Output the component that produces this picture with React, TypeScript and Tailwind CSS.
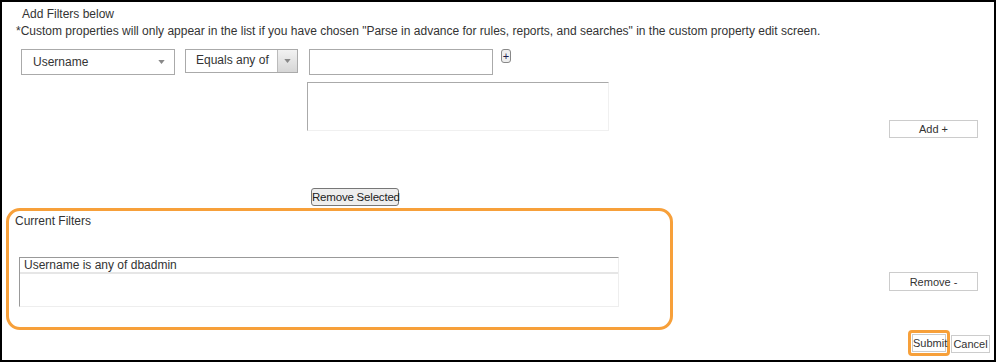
import React from "react";

const ORANGE = "#f7a03a";

function Caret() {
  return (
    <svg viewBox="0 0 8 5" className="h-[4px] w-[7px]">
      <path d="M0 0h8L4 5Z" fill="#888" />
    </svg>
  );
}

export default function App() {
  return (
    <div
      className="h-[363px] w-[996px] bg-white text-[12px] leading-[15px] whitespace-nowrap text-[#333]"
      style={{ fontFamily: '"Liberation Sans", Arial, sans-serif' }}
    >
      <div className="flex h-[362px] w-[996px] flex-col border-2 border-black">
        {/* header */}
        <div className="pl-[20px] pt-[5px]">Add Filters below</div>
        <div className="mt-[2px] pl-[14px]">
          *Custom properties will only appear in the list if you have chosen "Parse in advance for rules,
          reports, and searches" in the custom property edit screen.
        </div>

        {/* filter controls */}
        <div className="mt-[10px] ml-[19px] flex items-start">
          <div className="flex h-[26px] w-[154px] items-center justify-between border border-[#aaa] pl-[11px] pr-[9px]">
            <span>Username</span>
            <Caret />
          </div>
          <div className="ml-[10px] flex h-[24px] w-[113px] border border-[#aaa]">
            <div className="flex-1 pl-[10px] pt-[3px]">Equals any of</div>
            <div className="flex w-[20px] items-center justify-center border-l border-[#bbb] bg-gradient-to-b from-[#f2f2f2] to-[#d6d6d6]">
              <Caret />
            </div>
          </div>
          <input className="ml-[11px] h-[26px] w-[184px] border border-[#aaa] outline-none" />
          <button
            type="button"
            className="ml-[8px] flex h-[14px] w-[10px] items-center justify-center rounded-[3px] border border-[#888] bg-[#eee] text-[11px] leading-none text-[#1a1a4a]"
          >
            +
          </button>
        </div>

        <div className="mt-[7px] flex items-start">
          <textarea className="ml-[305px] h-[49px] w-[302px] resize-none border border-[#f0f0f0] border-t-[#aaa] border-l-[#aaa] outline-none" />
          <button
            type="button"
            className="mt-[38px] mr-[16px] ml-auto h-[18px] w-[89px] border border-[#ccc] bg-white text-[11px] leading-[16px] text-[#333]"
          >
            Add +
          </button>
        </div>

        <div className="mt-[50px] ml-[309px]">
          <button
            type="button"
            className="h-[18px] w-[88px] rounded-[3px] border border-[#777] bg-[#eee] px-0 text-[11.5px] leading-[15px] tracking-[-0.2px] text-[#222]"
          >
            Remove Selected
          </button>
        </div>

        {/* current filters */}
        <div className="mt-[2px] flex items-start">
          <div
            className="ml-[4px] h-[122px] w-[667px] rounded-[14px] border-[3px] pl-[6px] pt-[3px]"
            style={{ borderColor: ORANGE }}
          >
            <div>Current Filters</div>
            <div className="mt-[28px] ml-[4px] h-[50px] w-[600px] border border-[#eee] border-t-[#999] border-l-[#999]">
              <div className="h-[16px] border-b-2 border-[#e6e6e6] pl-[4px] leading-[14px]">
                Username is any of dbadmin
              </div>
            </div>
          </div>
          <button
            type="button"
            className="mt-[64px] mr-[16px] ml-auto h-[19px] w-[89px] border border-[#ccc] bg-white text-[11px] leading-[16px] text-[#333]"
          >
            Remove -
          </button>
        </div>

        {/* submit row */}
        <div className="mr-[4px] flex items-start justify-end">
          <div className="rounded-[4px] border-[3px] p-[1px]" style={{ borderColor: ORANGE }}>
            <button
              type="button"
              className="h-[18px] w-[34px] border border-[#ccc] bg-white px-0 text-[11px] leading-[15px] text-[#333]"
            >
              Submit
            </button>
          </div>
          <button
            type="button"
            className="mt-[5px] ml-[1px] h-[18px] w-[39px] border border-[#ccc] bg-white px-0 text-[11px] leading-[15px] text-[#333]"
          >
            Cancel
          </button>
        </div>
      </div>
    </div>
  );
}
